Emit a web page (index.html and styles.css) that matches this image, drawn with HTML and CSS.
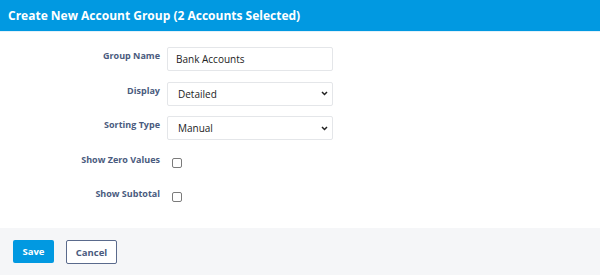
FILE: index.html
```html
<!DOCTYPE html>
<html lang="en">
<head>
    <meta charset="UTF-8">
    <meta name="viewport" content="width=device-width, initial-scale=1.0">
    <title>Create New Account Group</title>
    <link rel="stylesheet" href="styles.css">
</head>
<body>
    <div class="modal">
        <div class="modal-header">Create New Account Group (2 Accounts Selected)</div>
        <form class="modal-body">
            <label class="field-label" for="groupName">Group Name</label>
            <input class="field-input" type="text" id="groupName" value="Bank Accounts">

            <label class="field-label" for="display">Display</label>
            <select class="field-input field-select" id="display">
                <option>Detailed</option>
                <option>Summary</option>
            </select>

            <label class="field-label" for="sortingType">Sorting Type</label>
            <select class="field-input field-select" id="sortingType">
                <option>Manual</option>
                <option>Alphabetical</option>
            </select>

            <label class="field-label" for="showZero">Show Zero Values</label>
            <div class="check-cell"><input class="field-check" type="checkbox" id="showZero"></div>

            <label class="field-label" for="showSubtotal">Show Subtotal</label>
            <div class="check-cell"><input class="field-check" type="checkbox" id="showSubtotal"></div>
        </form>
        <div class="modal-footer">
            <button type="button" class="btn btn-primary">Save</button>
            <button type="button" class="btn btn-outline">Cancel</button>
        </div>
    </div>
</body>
</html>
```

FILE: styles.css
```css
body {
    margin: 0;
    font-family: "Open Sans", Arial, sans-serif;
    background-color: #ffffff;
}

.modal {
    width: 600px;
    height: 275px;
    display: flex;
    flex-direction: column;
}

.modal-header {
    height: 32px;
    box-sizing: border-box;
    padding: 0 8px;
    display: flex;
    align-items: center;
    background-color: #0199e1;
    color: #ffffff;
    font-size: 12px;
    font-weight: 700;
    border-bottom: 1px solid #e3f1fa;
}

.modal-body {
    height: 196px;
    box-sizing: border-box;
    margin: 0;
    padding: 15px 0 0 0;
    display: grid;
    grid-template-columns: 160px 166px;
    grid-auto-rows: 24px;
    column-gap: 7px;
    row-gap: 10.5px;
    align-content: start;
}

.field-label {
    text-align: right;
    font-size: 9px;
    font-weight: 700;
    color: #4a5b7e;
    padding-top: 3px;
    line-height: 12px;
}

.field-input {
    width: 100%;
    height: 24px;
    box-sizing: border-box;
    margin: 0;
    padding: 0 8px;
    border: 1px solid #e4e6e9;
    border-radius: 2px;
    background-color: #ffffff;
    font-family: "Open Sans", Arial, sans-serif;
    font-size: 10px;
    color: #222222;
    outline: none;
}

.field-select {
    -webkit-appearance: none;
    appearance: none;
    padding-left: 10px;
    background-image: url("data:image/svg+xml;utf8,<svg xmlns='http://www.w3.org/2000/svg' width='8' height='6' viewBox='0 0 8 6'><path d='M1 1.2 L4 4.2 L7 1.2' fill='none' stroke='%23222' stroke-width='1.8'/></svg>");
    background-repeat: no-repeat;
    background-position: right 4px center;
    background-size: 7px 5px;
}

.check-cell {
    display: flex;
    align-items: center;
    padding-left: 5px;
}

.field-check {
    -webkit-appearance: none;
    appearance: none;
    width: 10px;
    height: 10px;
    margin: 0;
    border: 1px solid #7b7b7b;
    border-radius: 2px;
    background-color: #ffffff;
}

.modal-footer {
    flex: 1;
    display: flex;
    align-items: flex-start;
    gap: 12px;
    padding: 12px 13px 0 13px;
    background-color: #f5f6f8;
}

.btn {
    height: 24px;
    box-sizing: border-box;
    margin: 0;
    border-radius: 2px;
    font-family: "Open Sans", Arial, sans-serif;
    font-size: 9.5px;
    font-weight: 700;
    cursor: pointer;
}

.btn-primary {
    width: 41px;
    height: 23px;
    border: none;
    background-color: #0199e1;
    color: #ffffff;
}

.btn-outline {
    width: 51px;
    border: 1.5px solid #5a6a8c;
    background-color: #ffffff;
    color: #4a5b7e;
}
```
